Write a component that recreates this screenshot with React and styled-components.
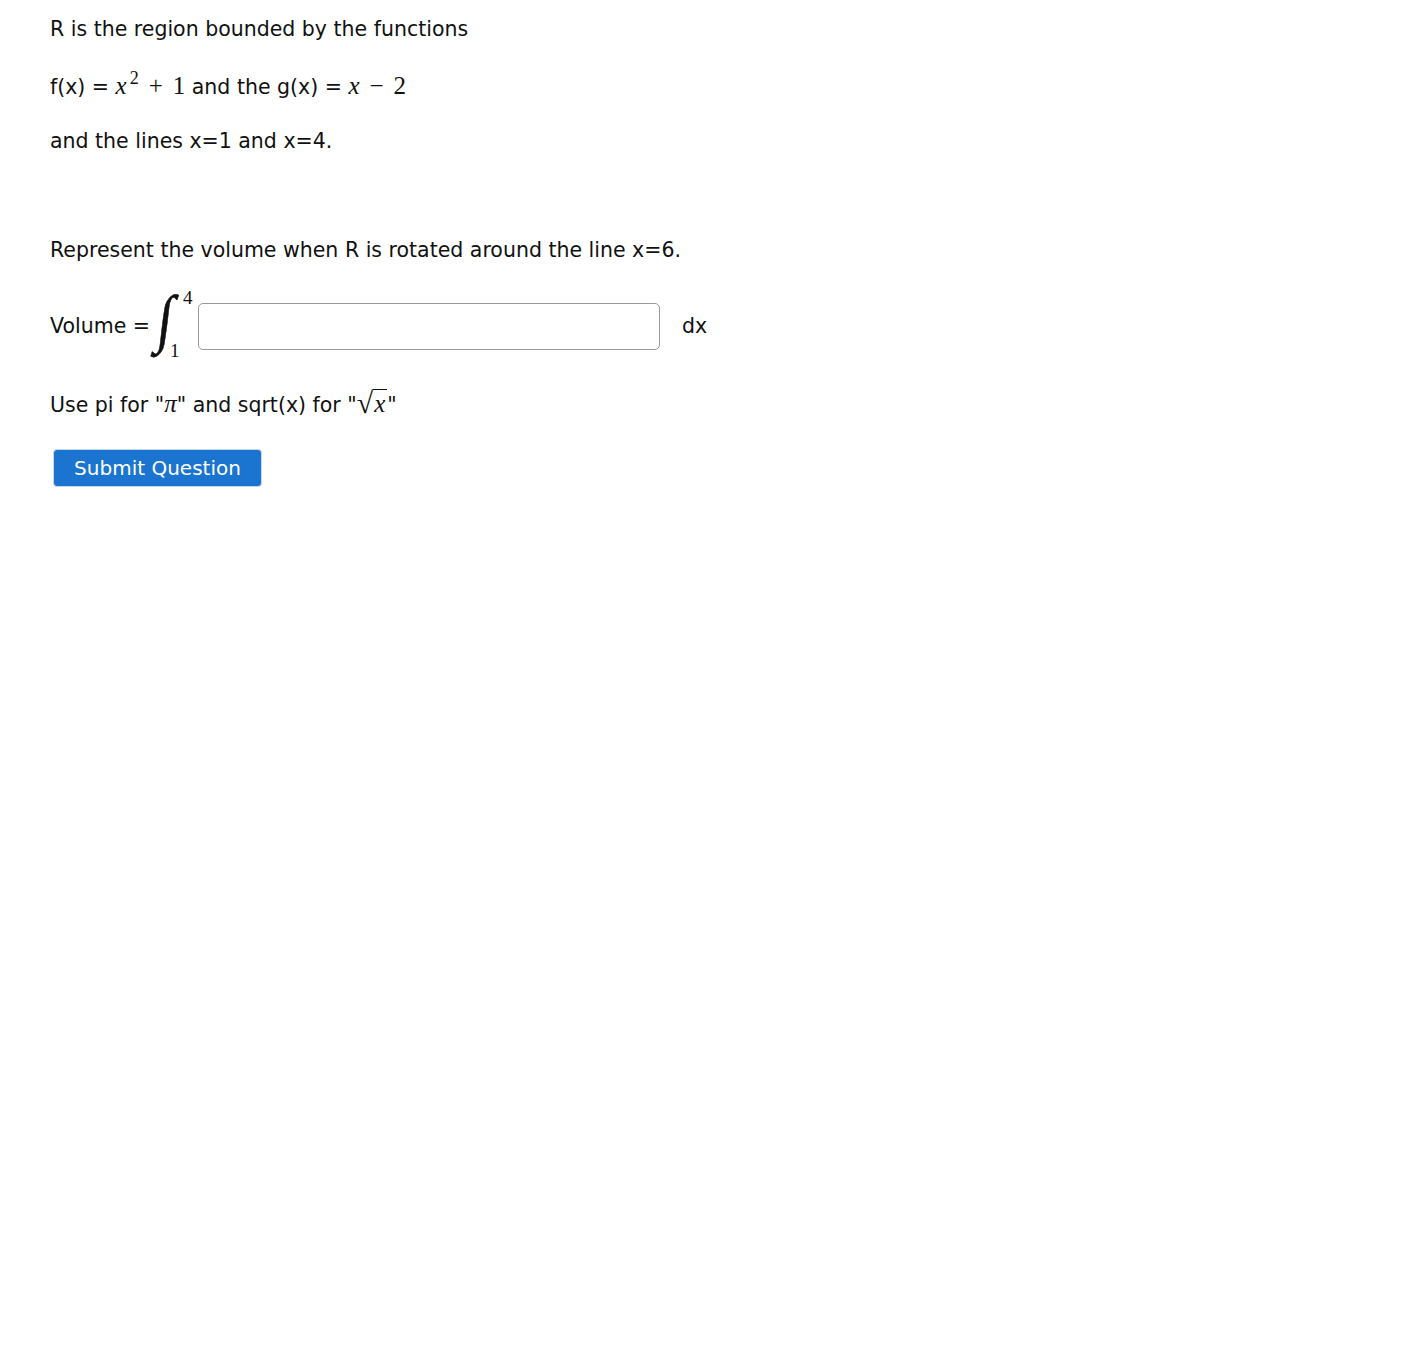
import React from 'react';
import styled, { createGlobalStyle } from 'styled-components';

const GlobalStyle = createGlobalStyle`
  body {
    margin: 0;
    background: #fff;
    color: #111;
    font-family: "DejaVu Sans", Verdana, sans-serif;
    font-size: 20.5px;
  }
`;

const Page = styled.div`
  padding: 15px 0 0 50px;
`;

const Para = styled.p`
  margin: 0 0 ${(p) => p.$after || 0}px;
  line-height: 28px;
  white-space: nowrap;
`;

const M = styled.span`
  font-family: "Liberation Serif", "DejaVu Serif", serif;
  font-style: ${(p) => (p.$up ? 'normal' : 'italic')};
  font-size: 25px;
  padding: 0 ${(p) => p.$pad || 0}px;
`;

const Sup = styled.sup`
  font-family: "Liberation Serif", serif;
  font-size: 18px;
  vertical-align: 10px;
  line-height: 0;
  margin-left: 3px;
`;

const Row = styled.div`
  display: flex;
  align-items: center;
  height: 70px;
  margin-bottom: 29px;
`;

const Integral = styled.span`
  position: relative;
  display: inline-block;
  width: 48px;
  height: 70px;
  font-family: "Liberation Serif", "DejaVu Serif", serif;
`;

const Sign = styled.span`
  position: absolute;
  left: 8px;
  top: -7px;
  font-size: 64px;
  line-height: 70px;
  -webkit-text-stroke: 0.6px #111;
  transform-origin: left center;
  transform: skewX(-7deg) scaleX(0.85);
`;

const Limit = styled.span`
  position: absolute;
  font-size: 19px;
  line-height: 19px;
  left: ${(p) => p.$x}px;
  top: ${(p) => p.$y}px;
`;

const Answer = styled.input`
  box-sizing: border-box;
  width: 462px;
  height: 47px;
  border: 1px solid #9a9a9a;
  border-radius: 5px;
  margin: 0 22px 0 0;
  font-size: 18px;
  padding: 0 8px;
`;

const Sqrt = styled.span`
  font-family: "Liberation Serif", serif;
  font-size: 25px;
  b {
    font-weight: normal;
    font-size: 30px;
    line-height: 0;
    vertical-align: -1px;
  }
  span {
    border-top: 1.5px solid #111;
    font-style: italic;
    padding: 0 2px 0 1px;
  }
`;

const Submit = styled.button`
  margin-left: 3px;
  background: #1b75d0;
  color: #fff;
  border: 1px solid #c9d6e4;
  border-radius: 4px;
  font-family: "DejaVu Sans", Verdana, sans-serif;
  font-size: 20px;
  height: 38px;
  width: 209px;
  padding: 0;
`;

export default function App() {
  return (
    <>
      <GlobalStyle />
      <Page>
        <Para $after={29}>R is the region bounded by the functions</Para>
        <Para $after={26}>
          f(x) = <M>x</M>
          <Sup>2</Sup>
          <M $up $pad={10}>+</M>
          <M $up>1</M> and the g(x) = <M>x</M>
          <M $up $pad={10}>−</M>
          <M $up>2</M>
        </Para>
        <Para $after={81}>and the lines x=1 and x=4.</Para>
        <Para $after={27}>Represent the volume when R is rotated around the line x=6.</Para>
        <Row>
          <span>Volume =</span>
          <Integral>
            <Sign>∫</Sign>
            <Limit $x={33} $y={-3}>4</Limit>
            <Limit $x={20} $y={50}>1</Limit>
          </Integral>
          <Answer type="text" />
          <span>dx</span>
        </Row>
        <Para $after={30}>
          Use pi for "<M>π</M>" and sqrt(x) for "
          <Sqrt>
            <b>√</b>
            <span>x</span>
          </Sqrt>
          "
        </Para>
        <Submit>Submit Question</Submit>
      </Page>
    </>
  );
}
